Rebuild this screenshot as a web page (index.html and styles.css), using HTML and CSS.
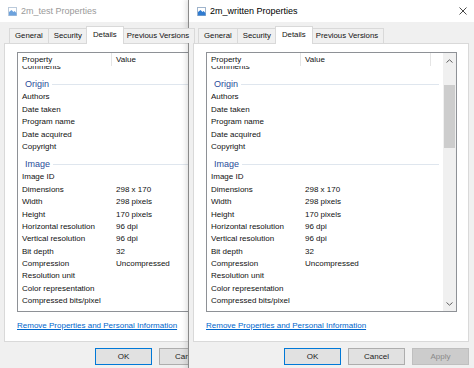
FILE: index.html
```html
<!DOCTYPE html>
<html lang="en">
<head>
    <meta charset="UTF-8">
    <title>Properties</title>
    <link rel="stylesheet" href="styles.css">
</head>
<body>
    <div class="desktop">
        <div class="window back">
            <div class="titlebar">
                <svg class="app-icon" width="9" height="9" viewBox="0 0 9 9"><rect x="0.5" y="0.5" width="8" height="8" fill="#fff" stroke="#9fb4cc"/><path d="M1 8.5V5L3.5 3 5.5 5 6.5 4 8.5 6V8.5Z" fill="#2f7bd0"/></svg>
                <span class="title">2m_test Properties</span>
            </div>
            <div class="content">
                <div class="tabs">
                    <div class="tab">General</div>
                    <div class="tab">Security</div>
                    <div class="tab selected">Details</div>
                    <div class="tab">Previous Versions</div>
                </div>
                <div class="panel">
                    <div class="listview">
                        <div class="lv-main">
                            <div class="lv-header">
                                <div class="hcol prop">Property</div>
                                <div class="hcol val">Value</div>
                            </div>
                            <div class="lv-body"></div>
                        </div>
                        <div class="scrollbar">
                            <div class="sb-btn"><svg width="7" height="4" viewBox="0 0 7 4"><path d="M0.5 3.5L3.5 0.8 6.5 3.5" fill="none" stroke="#606060"/></svg></div>
                            <div class="sb-track"><div class="sb-thumb"></div></div>
                            <div class="sb-btn"><svg width="7" height="4" viewBox="0 0 7 4"><path d="M0.5 0.5L3.5 3.2 6.5 0.5" fill="none" stroke="#606060"/></svg></div>
                        </div>
                    </div>
                    <a class="link" href="#">Remove Properties and Personal Information</a>
                </div>
                <div class="buttons">
                    <button class="btn default">OK</button>
                    <button class="btn">Cancel</button>
                    <button class="btn" disabled>Apply</button>
                </div>
            </div>
        </div>

        <div class="window front">
            <div class="titlebar">
                <svg class="app-icon" width="9" height="9" viewBox="0 0 9 9"><rect x="0.5" y="0.5" width="8" height="8" fill="#fff" stroke="#9fb4cc"/><path d="M1 8.5V5L3.5 3 5.5 5 6.5 4 8.5 6V8.5Z" fill="#2f7bd0"/></svg>
                <span class="title">2m_written Properties</span>
                <svg class="close" width="8" height="8" viewBox="0 0 8 8"><path d="M0.5 0.5L7.5 7.5M7.5 0.5L0.5 7.5" stroke="#333" stroke-width="0.9"/></svg>
            </div>
            <div class="content">
                <div class="tabs">
                    <div class="tab">General</div>
                    <div class="tab">Security</div>
                    <div class="tab selected">Details</div>
                    <div class="tab">Previous Versions</div>
                </div>
                <div class="panel">
                    <div class="listview">
                        <div class="lv-main">
                            <div class="lv-header">
                                <div class="hcol prop">Property</div>
                                <div class="hcol val">Value</div>
                            </div>
                            <div class="lv-body"></div>
                        </div>
                        <div class="scrollbar">
                            <div class="sb-btn"><svg width="7" height="4" viewBox="0 0 7 4"><path d="M0.5 3.5L3.5 0.8 6.5 3.5" fill="none" stroke="#606060"/></svg></div>
                            <div class="sb-track"><div class="sb-thumb"></div></div>
                            <div class="sb-btn"><svg width="7" height="4" viewBox="0 0 7 4"><path d="M0.5 0.5L3.5 3.2 6.5 0.5" fill="none" stroke="#606060"/></svg></div>
                        </div>
                    </div>
                    <a class="link" href="#">Remove Properties and Personal Information</a>
                </div>
                <div class="buttons">
                    <button class="btn default">OK</button>
                    <button class="btn">Cancel</button>
                    <button class="btn" disabled>Apply</button>
                </div>
            </div>
        </div>
    </div>

    <script>
        // both dialogs list the same details
        const details = [
            ['Comments', ''],
            ['#Origin'],
            ['Authors', ''],
            ['Date taken', ''],
            ['Program name', ''],
            ['Date acquired', ''],
            ['Copyright', ''],
            ['#Image'],
            ['Image ID', ''],
            ['Dimensions', '298 x 170'],
            ['Width', '298 pixels'],
            ['Height', '170 pixels'],
            ['Horizontal resolution', '96 dpi'],
            ['Vertical resolution', '96 dpi'],
            ['Bit depth', '32'],
            ['Compression', 'Uncompressed'],
            ['Resolution unit', ''],
            ['Color representation', ''],
            ['Compressed bits/pixel', '']
        ];

        document.querySelectorAll('.lv-body').forEach(function (body) {
            let html = '';
            details.forEach(function (d, i) {
                if (d[0].charAt(0) === '#') {
                    html += '<div class="group"><span>' + d[0].slice(1) + '</span><i></i></div>';
                } else {
                    html += '<div class="row' + (i === 0 ? ' clipped' : '') + '"><div class="p">' + d[0] + '</div><div class="v">' + d[1] + '</div></div>';
                }
            });
            body.innerHTML = html;
        });
    </script>
</body>
</html>
```

FILE: styles.css
```css
body {
    margin: 0;
    background: #f0f0f0;
    font-family: "Liberation Sans", Arial, sans-serif;
    font-size: 8px;
    color: #111;
    overflow: hidden;
}
.desktop {
    position: relative;
    width: 474px;
    height: 368px;
    overflow: hidden;
}
.window {
    position: absolute;
    top: -1px;
    width: 286px;
    height: 380px;
    background: #f0f0f0;
    border: 1px solid #c9c9c9;
}
.window.back {
    left: -1px;
}
.window.front {
    left: 188px;
    border-color: #8a8a8a;
    box-shadow: -2px 0 5px rgba(0,0,0,0.12);
}
.titlebar {
    height: 22px;
    background: #fff;
    display: flex;
    align-items: center;
    padding-left: 8px;
}
.title {
    font-size: 9px;
    margin-left: 4px;
    color: #000;
}
.back .title {
    color: #9a9a9a;
}
.back .app-icon {
    opacity: 0.7;
}
.close {
    margin-left: auto;
    margin-right: 8px;
}
.content {
    padding: 4px 0 0 4px;
}
.tabs {
    display: flex;
    align-items: flex-end;
    height: 17px;
    padding-left: 6px;
    position: relative;
    z-index: 1;
}
.tab {
    height: 15px;
    line-height: 14px;
    padding: 0 5px;
    box-sizing: border-box;
    border: 1px solid #d9d9d9;
    border-bottom: none;
    margin-left: -1px;
    font-size: 7.8px;
    background: #f0f0f0;
    white-space: nowrap;
}
.tab.selected {
    height: 18px;
    line-height: 16px;
    margin: 0 -2px -1px -2px;
    padding: 0 6px;
    background: #fff;
    position: relative;
    z-index: 2;
}
.panel {
    width: 276px;
    height: 299px;
    box-sizing: border-box;
    border: 1px solid #d9d9d9;
    background: #fff;
    padding: 8px 0 0 12px;
}
.listview {
    width: 251px;
    height: 260px;
    box-sizing: border-box;
    border: 1px solid #8e9196;
    display: flex;
}
.lv-main {
    flex: 1;
    min-width: 0;
    display: flex;
    flex-direction: column;
}
.lv-header {
    height: 13px;
    flex: none;
    display: flex;
}
.hcol {
    line-height: 14px;
    padding-left: 4px;
    box-sizing: border-box;
    border-right: 1px solid #e5e5e5;
}
.hcol.prop {
    width: 94px;
}
.hcol.val {
    width: 130px;
}
.lv-body {
    flex: 1;
    overflow: hidden;
}
.row {
    height: 12.4px;
    line-height: 12.4px;
    display: flex;
    white-space: nowrap;
}
.row.clipped {
    margin-top: -5px;
}
.row .p {
    width: 94px;
    padding-left: 4px;
    box-sizing: border-box;
}
.row .v {
    padding-left: 4px;
}
.group {
    height: 18px;
    box-sizing: border-box;
    padding: 3px 4px 0 7px;
    display: flex;
    align-items: center;
    line-height: 12px;
}
.group span {
    font-size: 9px;
    color: #2a4c9a;
}
.group i {
    flex: 1;
    height: 1px;
    margin-left: 3px;
    margin-top: 1px;
    background: #dfe6ee;
}
.scrollbar {
    width: 13px;
    flex: none;
    background: #f0f0f0;
    display: flex;
    flex-direction: column;
}
.sb-btn {
    height: 15px;
    display: flex;
    align-items: center;
    justify-content: center;
}
.sb-track {
    flex: 1;
}
.sb-thumb {
    margin: 17px 1px 0 1px;
    height: 63px;
    background: #cdcdcd;
}
.link {
    display: inline-block;
    margin-top: 8px;
    line-height: 12px;
    color: #0066cc;
    text-decoration: underline;
}
.buttons {
    width: 276px;
    display: flex;
    justify-content: flex-end;
    gap: 7px;
    margin-top: 6px;
}
.btn {
    width: 57px;
    height: 17px;
    padding: 0;
    font-family: inherit;
    font-size: 8px;
    color: #1b1b1b;
    background: #e1e1e1;
    border: 1px solid #adadad;
    border-radius: 0;
}
.btn.default {
    border-color: #0078d7;
}
.btn:disabled {
    background: #cccccc;
    border-color: #bfbfbf;
    color: #8a8a8a;
}
```
